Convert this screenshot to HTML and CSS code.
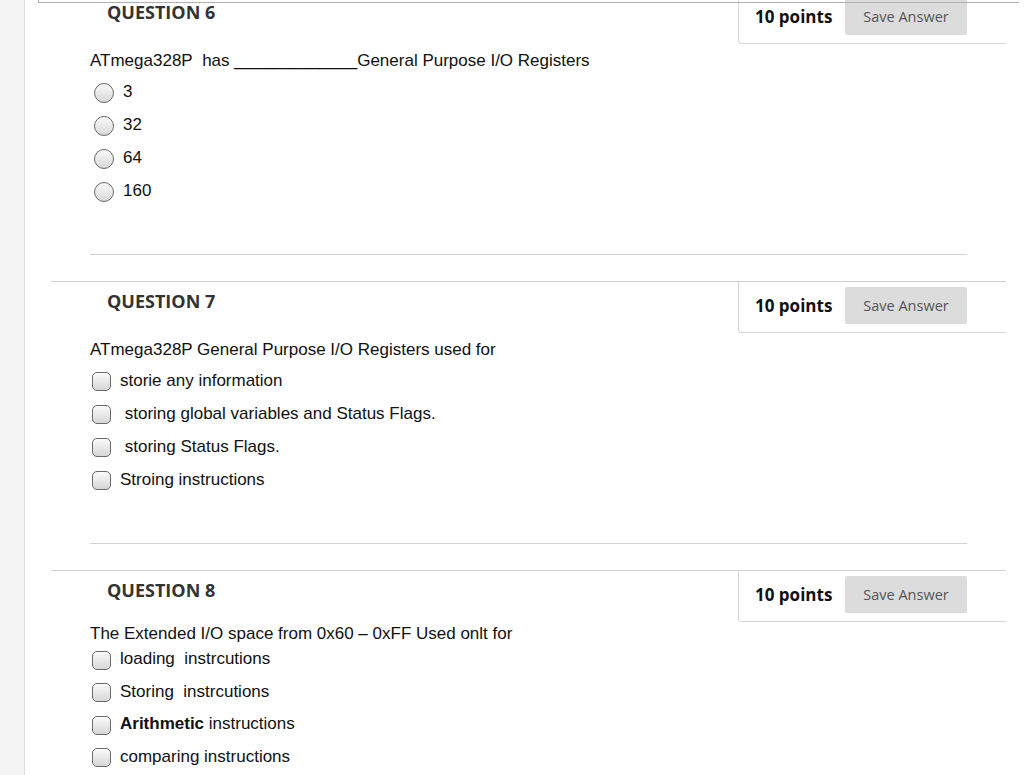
FILE: index.html
```html
<!DOCTYPE html>
<html>
<head>
<meta charset="utf-8">
<link rel="stylesheet" href="styles.css">
</head>
<body>
<div class="sidebar"></div>
<div class="main">
  <div class="prev-box"></div>

  <div class="question first">
    <div class="q-head">
      <h3 class="q-title">QUESTION 6</h3>
      <div class="points-box">
        <span class="points">10 points</span>
        <span class="save-btn">Save Answer</span>
      </div>
    </div>
    <div class="q-body">
      <p class="q-text">ATmega328P&nbsp; has _____________General Purpose I/O Registers</p>
      <ul class="options">
        <li class="opt"><span class="radio"></span><span class="opt-label radio-label">3</span></li>
        <li class="opt"><span class="radio"></span><span class="opt-label radio-label">32</span></li>
        <li class="opt"><span class="radio"></span><span class="opt-label radio-label">64</span></li>
        <li class="opt"><span class="radio"></span><span class="opt-label radio-label">160</span></li>
      </ul>
    </div>
    <div class="divider"></div>
  </div>

  <div class="question">
    <div class="q-head">
      <h3 class="q-title">QUESTION 7</h3>
      <div class="points-box">
        <span class="points">10 points</span>
        <span class="save-btn">Save Answer</span>
      </div>
    </div>
    <div class="q-body">
      <p class="q-text">ATmega328P General Purpose I/O Registers used for</p>
      <ul class="options">
        <li class="opt"><span class="check"></span><span class="opt-label">storie any information</span></li>
        <li class="opt"><span class="check"></span><span class="opt-label">&nbsp;storing global variables and Status Flags.</span></li>
        <li class="opt"><span class="check"></span><span class="opt-label">&nbsp;storing Status Flags.</span></li>
        <li class="opt"><span class="check"></span><span class="opt-label">Stroing instructions</span></li>
      </ul>
    </div>
    <div class="divider"></div>
  </div>

  <div class="question">
    <div class="q-head">
      <h3 class="q-title">QUESTION 8</h3>
      <div class="points-box">
        <span class="points">10 points</span>
        <span class="save-btn">Save Answer</span>
      </div>
    </div>
    <div class="q-body compact">
      <p class="q-text">The Extended I/O space from 0x60 – 0xFF Used onlt for</p>
      <ul class="options">
        <li class="opt"><span class="check"></span><span class="opt-label">loading&nbsp; instrcutions</span></li>
        <li class="opt"><span class="check"></span><span class="opt-label">Storing&nbsp; instrcutions</span></li>
        <li class="opt"><span class="check"></span><span class="opt-label"><b>Arithmetic</b> instructions</span></li>
        <li class="opt"><span class="check"></span><span class="opt-label">comparing instructions</span></li>
      </ul>
    </div>
    <div class="divider"></div>
  </div>
</div>
</body>
</html>
```

FILE: styles.css
```css
html, body {
  margin: 0;
  padding: 0;
  background: #fff;
  height: 775px;
  overflow: hidden;
}
body {
  display: flex;
  font-family: "Liberation Sans", Arial, sans-serif;
  color: #111;
}
.sidebar {
  width: 24px;
  flex: none;
  background: #f4f4f4;
  border-right: 1px solid #dcdcdc;
  height: 775px;
}
.main {
  position: relative;
  flex: 1;
  padding-left: 26px;
}
.prev-box {
  position: absolute;
  left: 13px;
  top: 0;
  width: 980px;
  height: 2px;
  border-left: 1px solid #b0b0b0;
  border-bottom: 1px solid #b0b0b0;
  z-index: 2;
}
.question {
  width: 955px;
  border-top: 1px solid #d2d2d2;
  padding-bottom: 26px;
}
.question.first {
  margin-top: -8px;
}
.q-head {
  display: flex;
  justify-content: space-between;
  align-items: flex-start;
  height: 50px;
}
.q-title {
  margin: 0;
  padding: 7px 0 0 56px;
  font-family: "Open Sans", sans-serif;
  font-weight: 700;
  font-size: 18px;
  line-height: 24px;
  color: #333;
}
.points-box {
  width: 251px;
  height: 50px;
  border-left: 1px solid #d6d6d6;
  border-bottom: 1px solid #d6d6d6;
  border-bottom-left-radius: 4px;
  display: flex;
  align-items: center;
  padding-left: 16px;
  box-sizing: content-box;
}
.points {
  font-family: "Open Sans", sans-serif;
  font-weight: 700;
  font-size: 17px;
  color: #111;
  width: 90px;
  margin-top: -3px;
}
.save-btn {
  width: 122px;
  height: 37px;
  background: #dcdcdc;
  border-radius: 2px;
  font-family: "Open Sans", sans-serif;
  font-size: 14.5px;
  color: #555;
  display: flex;
  align-items: center;
  justify-content: center;
  margin-top: -3px;
}
.q-body {
  height: 203px;
  padding: 8px 0 0 39px;
}
.q-text {
  margin: 0;
  font-size: 17px;
  line-height: 20px;
}
.options {
  list-style: none;
  margin: 4px 0 0;
  padding: 0;
}
.opt {
  display: flex;
  align-items: center;
  height: 33px;
  font-size: 17px;
}
.compact {
  padding-top: 3px;
  height: 208px;
}
.compact .options {
  margin-top: -1px;
}
.compact .opt {
  height: 32.5px;
}
.radio {
  width: 18px;
  height: 18px;
  border-radius: 50%;
  border: 1px solid #6a6a6a;
  background: linear-gradient(#fafafa, #d8d8d8);
  margin-left: 4px;
  margin-top: 2px;
}
.radio-label {
  margin-left: 9px;
}
.check {
  width: 17px;
  height: 17px;
  border-radius: 5px;
  border: 1px solid #6a6a6a;
  background: linear-gradient(#fbfbfb, #d6d6d6);
  margin-left: 2px;
  margin-top: 2px;
}
.opt-label {
  margin-left: 9px;
}
.divider {
  height: 1px;
  background: #d2d2d2;
  margin: 0 39px 0 39px;
}
```
